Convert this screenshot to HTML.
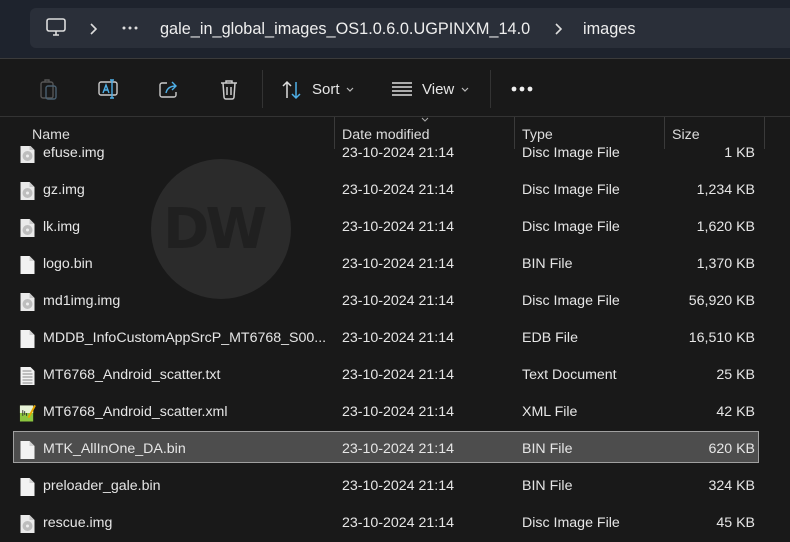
<!DOCTYPE html>
<html><head><meta charset="utf-8"><style>
*{margin:0;padding:0;box-sizing:border-box}
body{width:790px;height:542px;overflow:hidden;background:#191919;font-family:"Segoe UI","Liberation Sans",sans-serif;color:#e6e6e6;position:relative}
.top{position:absolute;left:0;top:0;width:790px;height:58px;background:#1e232d}
.crumb{position:absolute;left:30px;top:8px;width:770px;height:40px;background:#2a2f39;border-radius:6px}
.t{position:absolute;white-space:nowrap}
.line{position:absolute;left:0;top:58px;width:790px;height:1px;background:#3b3b3b}
.hline{position:absolute;left:0;top:116px;width:790px;height:1px;background:#333}
.vd{position:absolute;top:117px;width:1px;height:32px;background:#3a3a3a}
.list{position:absolute;left:0;top:146px;width:790px;height:396px;overflow:hidden}
.row{position:absolute;left:0;width:790px;height:36px;font-size:14.2px}
.row span{position:absolute;top:8px;white-space:nowrap}
.ic{position:absolute;left:19px;top:7px}
.sel{position:absolute;left:13px;top:431px;width:746px;height:32px;background:#4d4d4d;border:1px solid #a0a0a0}
.wm{position:absolute;left:151px;top:159px;width:140px;height:140px;border-radius:50%;background:#2b2b2b}
.wm b{position:absolute;left:12px;top:38px;font:900 56px "DejaVu Sans",sans-serif;color:#202020;letter-spacing:-4px}
</style></head><body>
<div class="top"></div>
<div class="crumb"></div>
<svg class="t" style="left:45px;top:16px" width="22" height="22" viewBox="0 0 22 22" fill="none" stroke="#ddd" stroke-width="1.6"><rect x="2" y="3" width="18" height="12" rx="2"/><path d="M8 19h6M11 15v4"/></svg>
<svg class="t" style="left:89px;top:23px" width="8" height="12" viewBox="0 0 8 12" fill="none" stroke="#ddd" stroke-width="1.6"><path d="M2 1l5 5-5 5"/></svg>
<svg class="t" style="left:122px;top:26px" width="16" height="4" viewBox="0 0 16 4" fill="#ddd"><circle cx="2" cy="2" r="1.5"/><circle cx="8" cy="2" r="1.5"/><circle cx="14" cy="2" r="1.5"/></svg>
<div class="t" style="left:160px;top:20px;font-size:16.3px;color:#eee">gale_in_global_images_OS1.0.6.0.UGPINXM_14.0</div>
<svg class="t" style="left:554px;top:23px" width="8" height="12" viewBox="0 0 8 12" fill="none" stroke="#ddd" stroke-width="1.6"><path d="M2 1l5 5-5 5"/></svg>
<div class="t" style="left:583px;top:20px;font-size:16.3px;color:#eee">images</div>
<div class="line"></div>
<svg class="t" style="left:38px;top:78px" width="22" height="22" viewBox="0 0 22 22" fill="none" stroke="#555" stroke-width="1.4"><rect x="3" y="4" width="12" height="16" rx="2"/><rect x="8" y="8" width="10" height="13" rx="2" stroke="#4a6070"/><path d="M7 4V2h4v2"/></svg>
<svg class="t" style="left:97px;top:78px" width="24" height="22" viewBox="0 0 24 22" fill="none" stroke="#ccc" stroke-width="1.4"><rect x="2" y="4" width="18" height="13" rx="2"/><path d="M6 15l3-8 3 8M7 12h4" stroke="#4fb0e8"/><path d="M15 2v18M13 2h4M13 20h4" stroke="#4fb0e8"/></svg>
<svg class="t" style="left:158px;top:78px" width="22" height="22" viewBox="0 0 22 22" fill="none" stroke="#ccc" stroke-width="1.4"><path d="M9 5H4a2 2 0 0 0-2 2v10a2 2 0 0 0 2 2h12a2 2 0 0 0 2-2v-3"/><path d="M8 15c1-5 5-7 10-7M14 4l4 4-4 4" stroke="#4fb0e8"/></svg>
<svg class="t" style="left:218px;top:78px" width="22" height="22" viewBox="0 0 22 22" fill="none" stroke="#ccc" stroke-width="1.5"><path d="M3 5h16M8 5V3h6v2M5 5l1 14a2 2 0 0 0 2 2h6a2 2 0 0 0 2-2l1-14M9 9v8M13 9v8"/></svg>
<div class="t" style="left:262px;top:70px;width:1px;height:38px;background:#333"></div>
<svg class="t" style="left:281px;top:80px" width="22" height="20" viewBox="0 0 22 20" fill="none" stroke-width="1.5"><path d="M6 18V2M2 6l4-4 4 4" stroke="#ddd"/><path d="M15 2v16M11 14l4 4 4-4" stroke="#4fb0e8"/></svg>
<div class="t" style="left:312px;top:81px;font-size:15px">Sort</div>
<svg class="t" style="left:346px;top:87px" width="8" height="6" viewBox="0 0 8 6" fill="none" stroke="#bbb" stroke-width="1.2"><path d="M1 1l3 3 3-3"/></svg>
<svg class="t" style="left:391px;top:81px" width="22" height="16" viewBox="0 0 22 16" stroke="#ddd" stroke-width="1.4"><path d="M1 2h20M1 6h20M1 10h20M1 14h20"/></svg>
<div class="t" style="left:422px;top:81px;font-size:15px">View</div>
<svg class="t" style="left:461px;top:87px" width="8" height="6" viewBox="0 0 8 6" fill="none" stroke="#bbb" stroke-width="1.2"><path d="M1 1l3 3 3-3"/></svg>
<div class="t" style="left:490px;top:70px;width:1px;height:38px;background:#333"></div>
<svg class="t" style="left:511px;top:86px" width="22" height="6" viewBox="0 0 22 6" fill="#eee"><circle cx="3" cy="3" r="2.4"/><circle cx="11" cy="3" r="2.4"/><circle cx="19" cy="3" r="2.4"/></svg>
<div class="hline"></div>
<div class="t" style="left:32px;top:127px;font-size:14.2px;color:#ddd">Name</div>
<div class="t" style="left:342px;top:127px;font-size:14.2px;color:#ddd">Date modified</div>
<svg class="t" style="left:421px;top:117px" width="8" height="5" viewBox="0 0 8 5" fill="none" stroke="#aaa" stroke-width="1"><path d="M1 1l3 3 3-3"/></svg>
<div class="t" style="left:522px;top:127px;font-size:14.2px;color:#ddd">Type</div>
<div class="t" style="left:672px;top:127px;font-size:14.2px;color:#ddd">Size</div>
<div class="vd" style="left:334px"></div><div class="vd" style="left:514px"></div><div class="vd" style="left:664px"></div><div class="vd" style="left:764px"></div>
<div class="wm"><b>DW</b></div>
<div class="sel"></div>
<div class="list" id="l"></div>
<svg width="0" height="0" style="position:absolute"><defs>
<symbol id="f" viewBox="0 0 16 20"><path d="M1 1h9l5 5v13H1z" fill="#f2f2f2"/><path d="M10 1v5h5" fill="#d0d0d0"/></symbol>
<symbol id="d" viewBox="0 0 16 20"><path d="M1 1h9l5 5v13H1z" fill="#eaeaea"/><path d="M10 1v5h5" fill="#c8c8c8"/><circle cx="8" cy="12" r="5" fill="#bdbdbd"/><circle cx="8" cy="12" r="1.5" fill="#eee"/></symbol>
<symbol id="x" viewBox="0 0 16 20"><path d="M1 1h10l4 4v14H1z" fill="#f2f2f2"/><path d="M3 5h9M3 8h10M3 11h10M3 14h10M3 17h10" stroke="#888" stroke-width="1"/></symbol>
<symbol id="m" viewBox="0 0 18 20"><rect x="1" y="2" width="14" height="17" fill="#8cc63f"/><rect x="1" y="2" width="14" height="8" fill="#e8f3d8"/><path d="M4 13v-6M6 12v-4M8 13v-3" stroke="#333" stroke-width="1"/><path d="M10 15L17 2" stroke="#e8a800" stroke-width="2"/></symbol>
</defs></svg>
<script>
var r=[["d","efuse.img","Disc Image File","1 KB"],["d","gz.img","Disc Image File","1,234 KB"],["d","lk.img","Disc Image File","1,620 KB"],["f","logo.bin","BIN File","1,370 KB"],["d","md1img.img","Disc Image File","56,920 KB"],["f","MDDB_InfoCustomAppSrcP_MT6768_S00...","EDB File","16,510 KB"],["x","MT6768_Android_scatter.txt","Text Document","25 KB"],["m","MT6768_Android_scatter.xml","XML File","42 KB"],["f","MTK_AllInOne_DA.bin","BIN File","620 KB"],["f","preloader_gale.bin","BIN File","324 KB"],["d","rescue.img","Disc Image File","45 KB"]];
var h="";r.forEach(function(a,i){var y=-9+37*i;h+='<div class="row" style="top:'+y+'px"><svg class="ic" width="17" height="20"><use href="#'+a[0]+'"/></svg><span style="left:43px">'+a[1]+'</span><span style="left:342px">23-10-2024 21:14</span><span style="left:522px">'+a[2]+'</span><span style="right:35px">'+a[3]+'</span></div>';});
document.getElementById("l").innerHTML=h;
</script>
</body></html>
